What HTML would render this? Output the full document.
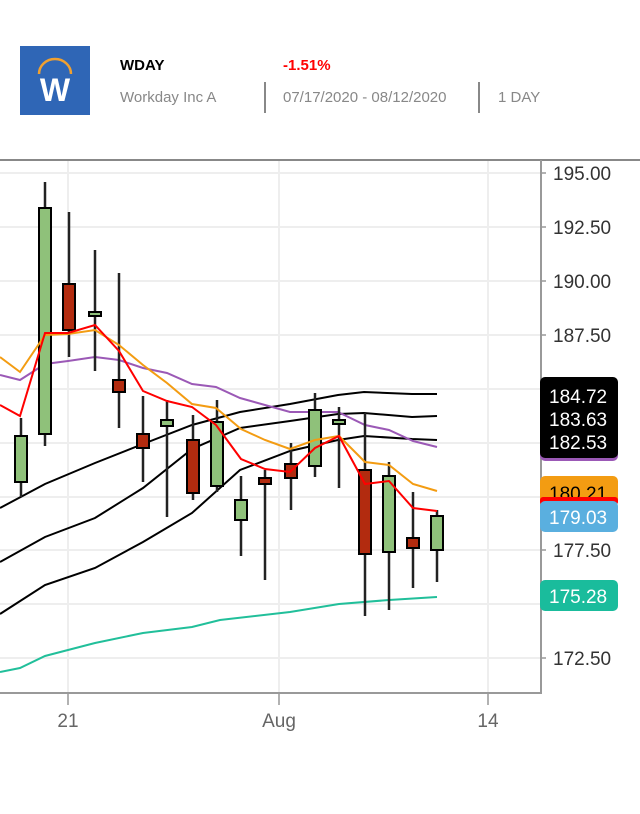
<!DOCTYPE html>
<html><head><meta charset="utf-8"><style>
body{margin:0;width:640px;height:814px;background:#fff;overflow:hidden;font-family:"Liberation Sans",Arial,sans-serif;position:relative}
.logo{position:absolute;left:20px;top:46px;width:70px;height:69px;background:#2f66b6}
.t{position:absolute;white-space:nowrap}
.div{position:absolute;width:2px;background:#888;top:82px;height:31px}
</style></head><body>
<div class="logo"><svg width="70" height="69"><path d="M19 28 A16 15 0 0 1 51 28" fill="none" stroke="#f0a030" stroke-width="2.5"/><text x="35" y="55" font-family="Liberation Sans,Arial,sans-serif" font-size="32" font-weight="bold" fill="#fff" text-anchor="middle">W</text></svg></div>
<div class="t" style="left:120px;top:57px;font-size:15px;font-weight:bold;color:#000">WDAY</div>
<div class="t" style="left:283px;top:57px;font-size:15px;font-weight:bold;color:#f00">-1.51%</div>
<div class="t" style="left:120px;top:89px;font-size:15px;color:#888">Workday Inc A</div>
<div class="div" style="left:264px"></div>
<div class="t" style="left:283px;top:89px;font-size:15px;color:#888">07/17/2020 - 08/12/2020</div>
<div class="div" style="left:478px"></div>
<div class="t" style="left:498px;top:89px;font-size:15px;color:#888">1 DAY</div>
<svg width="640" height="814" style="position:absolute;left:0;top:0" font-family="Liberation Sans,Arial,sans-serif">
<g stroke="#eee" stroke-width="2">
<line x1="0" y1="173" x2="541" y2="173"/><line x1="0" y1="227" x2="541" y2="227"/><line x1="0" y1="281" x2="541" y2="281"/><line x1="0" y1="335" x2="541" y2="335"/><line x1="0" y1="389" x2="541" y2="389"/><line x1="0" y1="443" x2="541" y2="443"/><line x1="0" y1="497" x2="541" y2="497"/><line x1="0" y1="550" x2="541" y2="550"/><line x1="0" y1="604" x2="541" y2="604"/><line x1="0" y1="658" x2="541" y2="658"/>
<line x1="68" y1="160" x2="68" y2="693"/><line x1="279" y1="160" x2="279" y2="693"/><line x1="488" y1="160" x2="488" y2="693"/>
</g>
<line x1="0" y1="160" x2="640" y2="160" stroke="#888" stroke-width="2"/>
<line x1="541" y1="160" x2="541" y2="694" stroke="#999" stroke-width="2"/>
<line x1="0" y1="693" x2="542" y2="693" stroke="#999" stroke-width="2"/>
<g stroke="#999" stroke-width="1.5"><line x1="68" y1="693" x2="68" y2="705"/><line x1="279" y1="693" x2="279" y2="705"/><line x1="488" y1="693" x2="488" y2="705"/>
<line x1="541" y1="173" x2="546" y2="173"/><line x1="541" y1="227" x2="546" y2="227"/><line x1="541" y1="281" x2="546" y2="281"/><line x1="541" y1="335" x2="546" y2="335"/><line x1="541" y1="550" x2="546" y2="550"/><line x1="541" y1="658" x2="546" y2="658"/></g>
<g font-size="19" fill="#333"><text x="553" y="180">195.00</text><text x="553" y="234">192.50</text><text x="553" y="288">190.00</text><text x="553" y="342">187.50</text><text x="553" y="557">177.50</text><text x="553" y="665">172.50</text></g>
<g font-size="19" fill="#666" text-anchor="middle"><text x="68" y="727">21</text><text x="279" y="727">Aug</text><text x="488" y="727">14</text></g>
<g fill="none" stroke-width="2">
<polyline stroke="#21bf9a" points="0,672 20,668 45,656 68,650 95,643 143,633 192,627 220,620 290,612 339,604 389,600 437,597"/>
<polyline stroke="#000" points="0,614 45,585 95,568 143,542 192,513 240,470 290,451 338,440 364,436 412,439 437,440"/>
<polyline stroke="#000" points="0,562 45,537 95,518 143,488 192,449 240,428 290,421 338,414 364,413 412,417 437,416"/>
<polyline stroke="#000" points="0,508 45,484 95,463 143,444 192,425 240,412 290,404 338,395 364,392 412,394 437,394"/>
<polyline stroke="#9b59b6" points="0,375 20,380 45,364 68,361 95,357 119,360 143,368 167,373 192,384 216,387 240,398 290,412 338,412 365,425 389,430 413,441 437,447"/>
</g>
<g stroke="#222" stroke-width="2.5">
<line x1="21" y1="418" x2="21" y2="497"/><line x1="45" y1="182" x2="45" y2="446"/><line x1="69" y1="212" x2="69" y2="357"/><line x1="95" y1="250" x2="95" y2="371"/><line x1="119" y1="273" x2="119" y2="428"/><line x1="143" y1="396" x2="143" y2="482"/><line x1="167" y1="400" x2="167" y2="517"/><line x1="193" y1="415" x2="193" y2="500"/><line x1="217" y1="400" x2="217" y2="492"/><line x1="241" y1="476" x2="241" y2="556"/><line x1="265" y1="470" x2="265" y2="580"/><line x1="291" y1="443" x2="291" y2="510"/><line x1="315" y1="393" x2="315" y2="477"/><line x1="339" y1="407" x2="339" y2="488"/><line x1="365" y1="413" x2="365" y2="616"/><line x1="389" y1="462" x2="389" y2="610"/><line x1="413" y1="492" x2="413" y2="588"/><line x1="437" y1="510" x2="437" y2="582"/>
</g>
<g stroke="#000" stroke-width="2">
<rect x="15" y="436" width="12" height="46" fill="#8fc17a"/>
<rect x="39" y="208" width="12" height="226" fill="#8fc17a"/>
<rect x="63" y="284" width="12" height="46" fill="#b22b0f"/>
<rect x="89" y="312" width="12" height="4" fill="#8fc17a"/>
<rect x="113" y="380" width="12" height="12" fill="#b22b0f"/>
<rect x="137" y="434" width="12" height="14" fill="#b22b0f"/>
<rect x="161" y="420" width="12" height="6" fill="#8fc17a"/>
<rect x="187" y="440" width="12" height="53" fill="#b22b0f"/>
<rect x="211" y="422" width="12" height="64" fill="#8fc17a"/>
<rect x="235" y="500" width="12" height="20" fill="#8fc17a"/>
<rect x="259" y="478" width="12" height="6" fill="#b22b0f"/>
<rect x="285" y="464" width="12" height="14" fill="#b22b0f"/>
<rect x="309" y="410" width="12" height="56" fill="#8fc17a"/>
<rect x="333" y="420" width="12" height="4" fill="#8fc17a"/>
<rect x="359" y="470" width="12" height="84" fill="#b22b0f"/>
<rect x="383" y="476" width="12" height="76" fill="#8fc17a"/>
<rect x="407" y="538" width="12" height="10" fill="#b22b0f"/>
<rect x="431" y="516" width="12" height="34" fill="#8fc17a"/>
</g>
<g fill="none" stroke-width="2">
<polyline stroke="#f39c12" points="0,357 20,372 45,335 68,334 95,330 119,345 143,365 167,383 192,404 216,408 241,429 265,440 290,449 315,440 339,436 365,462 389,465 413,484 437,491"/>
<polyline stroke="#f00" points="0,405 20,416 45,333 68,333 95,325 119,351 143,391 167,401 192,407 216,425 241,459 265,469 290,472 315,448 339,436 365,484 389,481 413,508 437,511"/>
</g>
<g font-size="19">
<rect x="540" y="380" width="78" height="81" rx="5" fill="#9b59b6"/>
<rect x="540" y="377" width="78" height="81" rx="5" fill="#000"/>
<text x="549" y="403" fill="#fff">184.72</text><text x="549" y="426" fill="#fff">183.63</text><text x="549" y="449" fill="#fff">182.53</text>
<rect x="540" y="476" width="78" height="28" rx="5" fill="#f39c12"/>
<text x="549" y="500" fill="#000">180.21</text>
<rect x="540" y="497" width="78" height="8" rx="3" fill="#f00"/>
<rect x="540" y="501" width="78" height="31" rx="5" fill="#5aafdf"/>
<text x="549" y="524" fill="#fff">179.03</text>
<rect x="540" y="580" width="78" height="31" rx="5" fill="#1abc9c"/>
<text x="549" y="603" fill="#fff">175.28</text>
</g>
</svg>
</body></html>
